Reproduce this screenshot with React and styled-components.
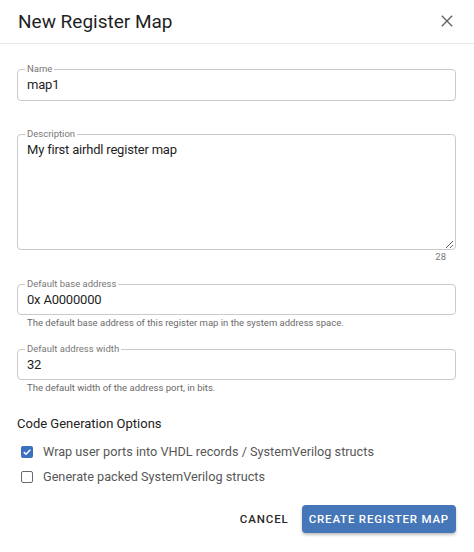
import React from 'react'
import styled, { createGlobalStyle } from 'styled-components'

const GlobalStyle = createGlobalStyle`
  html, body {
    margin: 0;
    padding: 0;
    background: #ffffff;
    font-family: Roboto, "Liberation Sans", Arial, sans-serif;
    color: #212121;
  }
  * { box-sizing: border-box; }
`

const Dialog = styled.div`
  width: 474px;
  height: 552px;
  background: #ffffff;
  display: flex;
  flex-direction: column;
`

const Header = styled.div`
  height: 44px;
  display: flex;
  align-items: center;
  justify-content: space-between;
  padding: 0 21px 1px 18px;
  border-bottom: 1px solid #e8e8e8;
`

const Title = styled.h2`
  margin: 0;
  font-size: 19px;
  font-weight: 400;
  color: #1f1f1f;
`

const CloseButton = styled.button`
  border: none;
  background: none;
  padding: 0;
  width: 12px;
  height: 12px;
  display: flex;
  cursor: pointer;
`

const Body = styled.div`
  padding: 20px 18px 0 17px;
  display: flex;
  flex-direction: column;
`

const FieldGroup = styled.div`
  display: flex;
  flex-direction: column;
  margin-bottom: ${p => p.$mb || 0}px;
`

const Outline = styled.fieldset`
  margin: 0;
  padding: 0 9px 0 9px;
  border: 1px solid #cacaca;
  border-radius: 4px;
  height: ${p => p.$h}px;
`

const Legend = styled.legend`
  font-size: 9.5px;
  line-height: 10px;
  color: #777777;
  padding: 0 2px;
  margin-left: -2px;
`

const Input = styled.input`
  display: block;
  width: 100%;
  border: none;
  outline: none;
  padding: 0;
  margin: 2px 0 0 0;
  height: 18px;
  font-family: inherit;
  font-size: 13px;
  line-height: 18px;
  letter-spacing: -0.2px;
  color: #1f1f1f;
  background: transparent;
`

const TextArea = styled.textarea`
  display: block;
  width: calc(100% + 8px);
  height: 108px;
  border: none;
  outline: none;
  padding: 0;
  margin: 2px -8px 0 0;
  font-family: inherit;
  font-size: 13px;
  line-height: 18px;
  letter-spacing: -0.2px;
  color: #1f1f1f;
  background: transparent;
  resize: vertical;
`

const Counter = styled.div`
  align-self: flex-end;
  font-size: 9.5px;
  line-height: 12px;
  color: #777777;
  margin: 1px 10px 0 0;
`

const Helper = styled.div`
  font-size: 9.5px;
  line-height: 12px;
  color: #6a6a6a;
  margin: 2px 0 0 10px;
`

const SectionTitle = styled.div`
  font-size: 13px;
  line-height: 16px;
  color: #222222;
  margin: 0 0 7px 0;
`

const CheckRow = styled.label`
  display: flex;
  align-items: center;
  gap: 10px;
  height: 25px;
  padding-left: 4px;
  font-size: 12.7px;
  color: #575757;
`

const Box = styled.span`
  width: 12px;
  height: 12px;
  border-radius: 2px;
  display: flex;
  align-items: center;
  justify-content: center;
  flex-shrink: 0;
  background: ${p => (p.$checked ? '#3a70bf' : '#ffffff')};
  border: ${p => (p.$checked ? 'none' : '1.5px solid #6a6a6a')};
`

const Actions = styled.div`
  display: flex;
  justify-content: flex-end;
  align-items: center;
  gap: 13px;
  padding: 16px 18px 0 0;
`

const TextButton = styled.button`
  border: none;
  background: none;
  font-family: inherit;
  font-size: 11.5px;
  font-weight: 500;
  letter-spacing: 0.9px;
  color: #2a2a2a;
  padding: 6px 0;
  cursor: pointer;
`

const PrimaryButton = styled.button`
  border: none;
  border-radius: 4px;
  background: #4576b7;
  color: #ffffff;
  font-family: inherit;
  font-size: 11.5px;
  font-weight: 500;
  letter-spacing: 0.8px;
  height: 28px;
  padding: 0 7px;
  box-shadow: 0 2px 3px rgba(0, 0, 0, 0.25);
  cursor: pointer;
`

const Check = ({ checked, children }) => (
  <CheckRow>
    <Box $checked={checked}>
      {checked && (
        <svg width="10" height="10" viewBox="0 0 10 10">
          <path d="M1.8 5.1 L4 7.2 L8.3 2.7" stroke="#fff" strokeWidth="1.5" fill="none" />
        </svg>
      )}
    </Box>
    {children}
  </CheckRow>
)

const App = () => {
  return (
    <Dialog>
      <GlobalStyle />
      <Header>
        <Title>New Register Map</Title>
        <CloseButton aria-label="close">
          <svg width="12" height="12" viewBox="0 0 12 12">
            <path d="M0.8 0.8 L11.2 11.2 M11.2 0.8 L0.8 11.2" stroke="#5f5f5f" strokeWidth="1.3" />
          </svg>
        </CloseButton>
      </Header>
      <Body>
        <FieldGroup $mb={28}>
          <Outline $h={37}>
            <Legend>Name</Legend>
            <Input readOnly defaultValue="map1" />
          </Outline>
        </FieldGroup>

        <FieldGroup $mb={16}>
          <Outline $h={121}>
            <Legend>Description</Legend>
            <TextArea readOnly defaultValue="My first airhdl register map" />
          </Outline>
          <Counter>28</Counter>
        </FieldGroup>

        <FieldGroup $mb={15}>
          <Outline $h={36}>
            <Legend>Default base address</Legend>
            <Input readOnly defaultValue="0x A0000000" />
          </Outline>
          <Helper>The default base address of this register map in the system address space.</Helper>
        </FieldGroup>

        <FieldGroup $mb={22}>
          <Outline $h={36}>
            <Legend>Default address width</Legend>
            <Input readOnly defaultValue="32" />
          </Outline>
          <Helper>The default width of the address port, in bits.</Helper>
        </FieldGroup>

        <SectionTitle>Code Generation Options</SectionTitle>
        <Check checked>Wrap user ports into VHDL records / SystemVerilog structs</Check>
        <Check>Generate packed SystemVerilog structs</Check>
      </Body>
      <Actions>
        <TextButton>CANCEL</TextButton>
        <PrimaryButton>CREATE REGISTER MAP</PrimaryButton>
      </Actions>
    </Dialog>
  )
}

export default App
